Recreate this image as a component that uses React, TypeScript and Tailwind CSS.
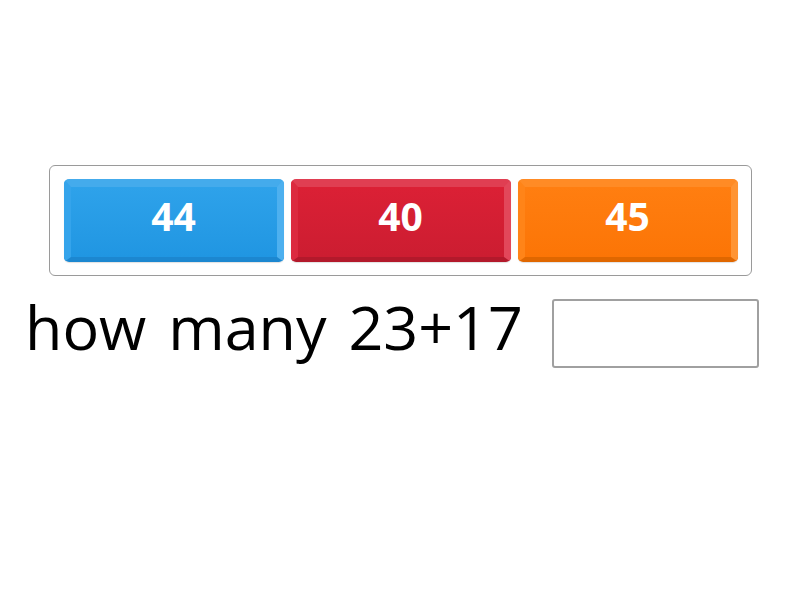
const answers = [
  {
    label: "44",
    face: "bg-gradient-to-b from-[#2ea2ea] to-[#2096e2]",
    edges: "border-t-[#44abec] border-r-[#4db0ef] border-b-[#1c87d0] border-l-[#35a4eb]",
  },
  {
    label: "40",
    face: "bg-gradient-to-b from-[#db2035] to-[#cc1d31]",
    edges: "border-t-[#e03e52] border-r-[#e2475a] border-b-[#b3192b] border-l-[#dc2a3f]",
  },
  {
    label: "45",
    face: "bg-gradient-to-b from-[#ff7e10] to-[#fc7506]",
    edges: "border-t-[#ff8b25] border-r-[#ff9433] border-b-[#e06700] border-l-[#ff8418]",
  },
];

export default function App() {
  return (
    <div className="w-[800px] h-[600px] bg-white font-['Open_Sans',sans-serif] text-black">
      <div className="pt-[165px] flex justify-center">
        <div className="w-[703px] h-[111px] rounded-[6px] border border-[#9a9a9a] pl-[14px] pr-[13px] pt-[13px] flex gap-[7px]">
          {answers.map((a) => (
            <div
              key={a.label}
              className={`w-[220px] h-[83px] rounded-[5px] border-t-[8px] border-r-[7px] border-b-[5px] border-l-[7px] ${a.edges} ${a.face} flex items-center justify-center shadow-[0_1px_1px_rgba(0,0,0,0.12)]`}
            >
              <span className="text-white font-bold text-[39px] leading-none -mt-[14px]">{a.label}</span>
            </div>
          ))}
        </div>
      </div>
      <div className="flex items-start pl-[25px] mt-[23px]">
        <span className="text-[61px] leading-[55px] [word-spacing:6px]">how many 23+17</span>
        <div className="ml-auto mr-[41px] w-[207px] h-[69px] rounded-[3px] border-2 border-[#a0a0a0] bg-white" />
      </div>
    </div>
  );
}
